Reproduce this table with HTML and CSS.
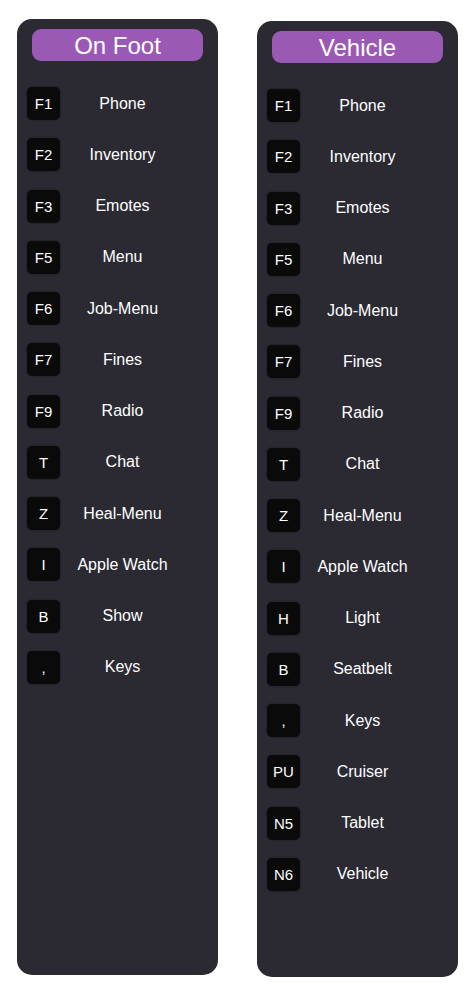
FILE: index.html
```html
<!DOCTYPE html>
<html lang="en">
  <head>
    <meta charset="UTF-8" />
    <meta name="viewport" content="width=device-width, initial-scale=1.0" />
    <title>Keybinds</title>
    <link rel="stylesheet" href="styles.css">
  </head>

  <body>
    <div class="boards">
      <div class="panel">
        <h2 class="title">On Foot</h2>
        <div class="list">
          <div class="row"><span class="key">F1</span><span class="label">Phone</span></div>
          <div class="row"><span class="key">F2</span><span class="label">Inventory</span></div>
          <div class="row"><span class="key">F3</span><span class="label">Emotes</span></div>
          <div class="row"><span class="key">F5</span><span class="label">Menu</span></div>
          <div class="row"><span class="key">F6</span><span class="label">Job-Menu</span></div>
          <div class="row"><span class="key">F7</span><span class="label">Fines</span></div>
          <div class="row"><span class="key">F9</span><span class="label">Radio</span></div>
          <div class="row"><span class="key">T</span><span class="label">Chat</span></div>
          <div class="row"><span class="key">Z</span><span class="label">Heal-Menu</span></div>
          <div class="row"><span class="key">I</span><span class="label">Apple Watch</span></div>
          <div class="row"><span class="key">B</span><span class="label">Show</span></div>
          <div class="row"><span class="key">,</span><span class="label">Keys</span></div>
        </div>
      </div>

      <div class="panel vehicle">
        <h2 class="title">Vehicle</h2>
        <div class="list">
          <div class="row"><span class="key">F1</span><span class="label">Phone</span></div>
          <div class="row"><span class="key">F2</span><span class="label">Inventory</span></div>
          <div class="row"><span class="key">F3</span><span class="label">Emotes</span></div>
          <div class="row"><span class="key">F5</span><span class="label">Menu</span></div>
          <div class="row"><span class="key">F6</span><span class="label">Job-Menu</span></div>
          <div class="row"><span class="key">F7</span><span class="label">Fines</span></div>
          <div class="row"><span class="key">F9</span><span class="label">Radio</span></div>
          <div class="row"><span class="key">T</span><span class="label">Chat</span></div>
          <div class="row"><span class="key">Z</span><span class="label">Heal-Menu</span></div>
          <div class="row"><span class="key">I</span><span class="label">Apple Watch</span></div>
          <div class="row"><span class="key">H</span><span class="label">Light</span></div>
          <div class="row"><span class="key">B</span><span class="label">Seatbelt</span></div>
          <div class="row"><span class="key">,</span><span class="label">Keys</span></div>
          <div class="row"><span class="key">PU</span><span class="label">Cruiser</span></div>
          <div class="row"><span class="key">N5</span><span class="label">Tablet</span></div>
          <div class="row"><span class="key">N6</span><span class="label">Vehicle</span></div>
        </div>
      </div>
    </div>
  </body>
</html>
```

FILE: styles.css
```css
* { box-sizing: border-box; font-family: "Liberation Sans", Arial, sans-serif; }
body { margin: 0; background-color: #fff; }

.boards { display: flex; gap: 39px; padding: 19px 0 0 17px; }

.panel { width: 201px; height: 956px; background-color: #2b2a33; border-radius: 15px; padding: 10px 0 0 0; }
.panel.vehicle { margin-top: 2px; }

.title { width: 171px; height: 32px; margin: 0 auto; background-color: #9b59b6; border-radius: 9px; color: #fff; font-size: 24px; font-weight: normal; line-height: 33px; text-align: center; }

.list { display: flex; flex-direction: column; gap: 18.27px; margin: 26px 0 0 10px; }
.row { display: grid; grid-template-columns: 33px 1fr 33px; align-items: center; height: 33px; }

.key { display: flex; align-items: center; justify-content: center; width: 33px; height: 33px; background-color: #0a0a0a; border-radius: 5px; box-shadow: 0 0 2px rgba(0,0,0,0.6); color: #fff; font-size: 15px; }
.label { color: #fff; font-size: 16px; text-align: center; }
```
